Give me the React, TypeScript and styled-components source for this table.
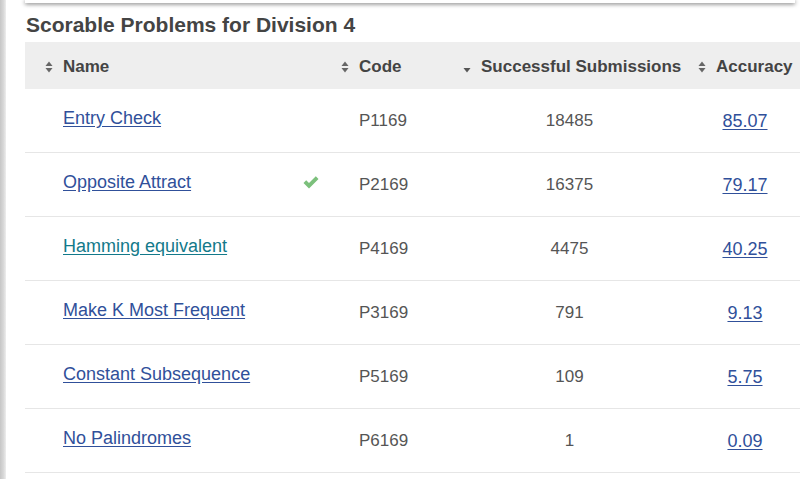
import React from "react";
import styled, { createGlobalStyle } from "styled-components";

const Global = createGlobalStyle`
  html, body { margin: 0; padding: 0; background: #fff; }
  body { font-family: "Liberation Sans", Arial, sans-serif; overflow: hidden; }
`;

const Page = styled.div`
  display: flex;
  width: 804px;
  height: 479px;
  overflow: hidden;
`;

const LeftEdge = styled.div`
  width: 6px;
  flex: none;
  background: linear-gradient(to right, #c6c6c6, #d9d9d9 60%, #eeeeee);
`;

const Main = styled.div`
  flex: 1;
  padding: 0 4px 0 19px;
  display: flex;
  flex-direction: column;
`;

const TopCard = styled.div`
  height: 3px;
  margin-right: 5px;
  background: #fff;
  box-shadow: 0 1px 4px rgba(0, 0, 0, 0.6);
`;

const Title = styled.h2`
  margin: 0;
  padding: 10px 0 0 1px;
  height: 29px;
  font-size: 21px;
  line-height: 24px;
  font-weight: bold;
  color: #444;
`;

const Grid = `
  display: grid;
  grid-template-columns: 296px 122px 235px 1fr;
`;

const HeadRow = styled.div`
  ${Grid};
  height: 47px;
  background: #eeeeee;
`;

const HeadCell = styled.div`
  display: flex;
  align-items: center;
  padding: 3px 0 0 20px;
  font-size: 17px;
  font-weight: bold;
  color: #444;
  white-space: nowrap;
`;

const SortIcon = styled.svg`
  width: 8px;
  height: 12px;
  margin-right: 10px;
  flex: none;
`;

const Row = styled.div`
  ${Grid};
  height: 63px;
  border-bottom: 1px solid #e6e6e6;
`;

const NameCell = styled.div`
  display: flex;
  align-items: center;
  justify-content: space-between;
  padding: 0 2px 5px 38px;
`;

const Cell = styled.div<{ $pl?: number; $center?: boolean }>`
  display: flex;
  align-items: center;
  justify-content: ${(p) => (p.$center ? "center" : "flex-start")};
  padding-left: ${(p) => p.$pl ?? 0}px;
  padding-top: 1px;
  font-size: 17px;
  color: #555;
`;

const Link = styled.a<{ $visited?: boolean }>`
  font-size: 18px;
  color: ${(p) => (p.$visited ? "#13798a" : "#30509a")};
  text-decoration: underline;
  text-underline-offset: 2px;
  cursor: pointer;
`;

const Check = styled.svg`
  width: 16px;
  height: 13px;
`;

function Sort({ mode }: { mode: "both" | "desc" }) {
  return (
    <SortIcon viewBox="0 0 8 12">
      {mode === "both" ? (
        <>
          <path d="M4 0.5 L7.5 5 H0.5 Z" fill="#666" />
          <path d="M4 11.5 L7.5 7 H0.5 Z" fill="#666" />
        </>
      ) : (
        <path d="M0.5 7 H7.5 L4 11.5 Z" fill="#555" />
      )}
    </SortIcon>
  );
}

type P = { name: string; code: string; subs: number; acc: string; solved?: boolean; visited?: boolean };

const data: P[] = [
  { name: "Entry Check", code: "P1169", subs: 18485, acc: "85.07" },
  { name: "Opposite Attract", code: "P2169", subs: 16375, acc: "79.17", solved: true },
  { name: "Hamming equivalent", code: "P4169", subs: 4475, acc: "40.25", visited: true },
  { name: "Make K Most Frequent", code: "P3169", subs: 791, acc: "9.13" },
  { name: "Constant Subsequence", code: "P5169", subs: 109, acc: "5.75" },
  { name: "No Palindromes", code: "P6169", subs: 1, acc: "0.09" },
];

export default function App() {
  return (
    <>
      <Global />
      <Page>
        <LeftEdge />
        <Main>
          <TopCard />
          <Title>Scorable Problems for Division 4</Title>
          <HeadRow>
            <HeadCell><Sort mode="both" />Name</HeadCell>
            <HeadCell><Sort mode="both" />Code</HeadCell>
            <HeadCell><Sort mode="desc" />Successful Submissions</HeadCell>
            <HeadCell><Sort mode="both" />Accuracy</HeadCell>
          </HeadRow>
          {data.map((d) => (
            <Row key={d.code}>
              <NameCell>
                <Link $visited={d.visited}>{d.name}</Link>
                {d.solved && (
                  <Check viewBox="0 0 16 13">
                    <path d="M0.5 7 L3.2 4.3 L6 7.1 L12.8 0.3 L15.5 3 L6 12.5 Z" fill="#7cc07c" />
                  </Check>
                )}
              </NameCell>
              <Cell $pl={38}>{d.code}</Cell>
              <Cell $pl={18} $center>{d.subs}</Cell>
              <Cell $pl={12} $center><Link>{d.acc}</Link></Cell>
            </Row>
          ))}
        </Main>
      </Page>
    </>
  );
}
